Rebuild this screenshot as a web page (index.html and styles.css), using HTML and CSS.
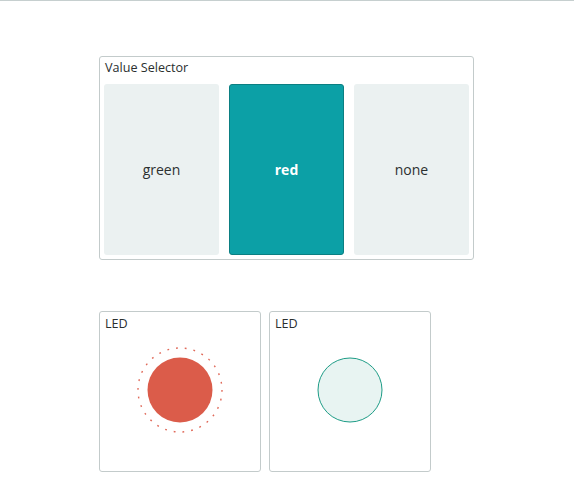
FILE: index.html
```html
<!DOCTYPE html>
<html>
<head>
<meta charset="utf-8">
<link rel="stylesheet" href="styles.css">
</head>
<body>
<div class="page">
  <div class="selector">
    <div class="title">Value Selector</div>
    <div class="options">
      <div class="opt">green</div>
      <div class="opt active">red</div>
      <div class="opt">none</div>
    </div>
  </div>
  <div class="leds">
    <div class="led-card">
      <div class="title">LED</div>
      <div class="led-body">
        <svg width="90" height="90" viewBox="0 0 90 90">
          <circle cx="45" cy="45" r="42" fill="none" stroke="#e06a5a" stroke-width="1.4" stroke-dasharray="1.8 7"/>
          <circle cx="45" cy="45" r="32.5" fill="#db5c4a"/>
        </svg>
      </div>
    </div>
    <div class="led-card">
      <div class="title">LED</div>
      <div class="led-body">
        <svg width="90" height="90" viewBox="0 0 90 90">
          <circle cx="45" cy="45" r="32" fill="#e8f4f2" stroke="#1d9c86" stroke-width="1"/>
        </svg>
      </div>
    </div>
  </div>
</div>
</body>
</html>
```
FILE: styles.css
```css
html, body {
  margin: 0;
  padding: 0;
  background: #ffffff;
  font-family: "Open Sans", "Noto Sans", sans-serif;
  color: #2f3535;
}
.page {
  border-top: 1px solid #c6cfcf;
  padding: 55px 0 0 99px;
}
.selector {
  border: 1px solid #c3cbcb;
  border-radius: 3px;
  padding: 0 4px 4px 4px;
  box-sizing: content-box;
  width: 365px;
  height: 198px;
  display: flex;
  flex-direction: column;
}
.title {
  font-size: 12.6px;
  line-height: 20px;
  padding: 1px 0 0 1px;
  height: 27px;
  box-sizing: border-box;
  color: #2a2f2f;
}
.options {
  display: flex;
  gap: 10px;
  flex: 1;
}
.opt {
  width: 115px;
  background: #ebf1f1;
  border-radius: 3px;
  display: flex;
  align-items: center;
  justify-content: center;
  font-size: 14px;
  color: #2b3030;
  box-sizing: border-box;
}
.opt.active {
  background: #0ca0a6;
  border: 1px solid #0b7f82;
  color: #ffffff;
  font-weight: 700;
}
.leds {
  display: flex;
  gap: 8px;
  margin-top: 51px;
}
.led-card {
  width: 160px;
  height: 159px;
  border: 1px solid #c3cbcb;
  border-radius: 3px;
  display: flex;
  flex-direction: column;
}
.led-card .title {
  padding: 2px 0 0 5px;
  height: 30px;
}
.led-body {
  display: flex;
  justify-content: center;
  padding-top: 3px;
}
.led-body svg {
  display: block;
}
```
